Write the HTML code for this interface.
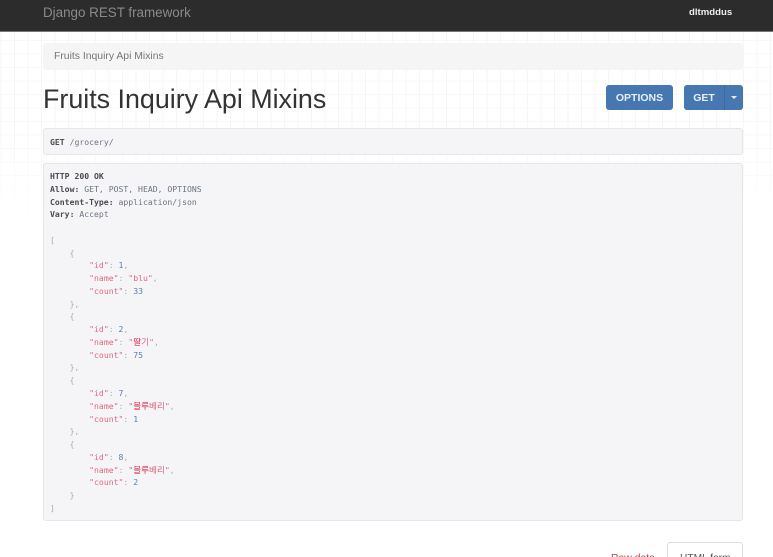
<!DOCTYPE html>
<html lang="en">
<head>
<meta charset="utf-8">
<title>Fruits Inquiry Api Mixins</title>
<style>
html,body{margin:0;padding:0;background:#fff;width:773px;height:557px;overflow:hidden;}
#page{position:relative;width:773px;height:557px;overflow:hidden;font-family:"Liberation Sans",sans-serif;}
#grid{position:absolute;left:0;top:31px;width:773px;height:195px;
 background-image:linear-gradient(to right,#f6f6f6 1px,transparent 1px),linear-gradient(to bottom,#f8f8f8 1px,transparent 1px);
 background-size:13.5px 13.5px;background-position:0.5px 9px;
 -webkit-mask-image:linear-gradient(to bottom,#000 0,#000 50%,transparent 100%);
 mask-image:linear-gradient(to bottom,#000 0,#000 50%,transparent 100%);}
#nav{position:absolute;left:0;top:0;width:773px;height:31px;background:#2c2c2c;border-bottom:1px solid #777;}
#brand{position:absolute;left:43px;top:5px;font-size:13.4px;line-height:16px;color:#8a8a8a;white-space:nowrap;}
#user{position:absolute;left:689px;top:7px;font-size:9.6px;line-height:12px;font-weight:bold;color:#eee;white-space:nowrap;}
#crumb{position:absolute;left:43px;top:43px;width:700px;height:27px;background:#f5f5f5;border-radius:3px;}
#crumb span{position:absolute;left:11px;top:7px;font-size:10.4px;line-height:13px;color:#777;white-space:nowrap;}
h1{position:absolute;left:43px;top:81px;margin:0;font-size:26.83px;line-height:36px;font-weight:normal;color:#333;white-space:nowrap;}
.btn{position:absolute;top:85px;height:25px;background:#4677b0;color:#e8eef5;font-size:10.5px;line-height:26px;font-weight:bold;text-align:center;}
#opt{left:606px;width:67px;border-radius:3px;}
#get{left:684px;width:40px;border-radius:3px 0 0 3px;}
#car{left:724px;width:19px;border-radius:0 3px 3px 0;border-left:1px solid #3c6a9f;box-sizing:border-box;}
#car i{position:absolute;left:6px;top:11px;width:0;height:0;border-left:3px solid transparent;border-right:3px solid transparent;border-top:3px solid #e8eef5;}
.box{position:absolute;left:43px;width:700px;box-sizing:border-box;background:#f5f5f8;border:1px solid #e6e6e6;border-radius:3px;}
#req{top:128px;height:27px;}
#res{top:163px;height:358px;}
pre{position:absolute;left:6px;margin:0;font-family:"DejaVu Sans Mono","Noto Sans CJK KR",monospace;font-size:8.15px;line-height:12.77px;color:#6c7480;white-space:pre;}
#req pre{top:7px;}
#res pre{top:6px;}
b{color:#4a4a50;font-weight:bold;}
.s{color:#dc6a80;}
.n{color:#5d7fa0;}
.p{color:#a5aeae;}
.k{color:#dd2a4c;}
.h{font-family:"Noto Sans CJK KR",sans-serif;font-size:8.6px;line-height:1;}
#raw{position:absolute;left:611px;top:552px;font-size:10.4px;line-height:13px;white-space:nowrap;color:#a94442;}
#html{position:absolute;left:667px;top:542px;width:76px;height:30px;box-sizing:border-box;border:1px solid #ddd;border-radius:3px 3px 0 0;background:#fff;}
#html span{position:absolute;left:12px;top:9px;font-size:10.2px;line-height:13px;color:#555;white-space:nowrap;}
</style>
</head>
<body>
<div id="page">
<div id="grid"></div>
<div id="nav">
  <div id="brand">Django REST framework</div>
  <div id="user">dltmddus</div>
</div>
<div id="crumb"><span>Fruits Inquiry Api Mixins</span></div>
<h1>Fruits Inquiry Api Mixins</h1>
<div class="btn" id="opt">OPTIONS</div>
<div class="btn" id="get">GET</div>
<div class="btn" id="car"><i></i></div>
<div class="box" id="req"><pre><b>GET</b> /grocery/</pre></div>
<div class="box" id="res"><pre><b>HTTP 200 OK</b>
<b>Allow:</b> GET, POST, HEAD, OPTIONS
<b>Content-Type:</b> application/json
<b>Vary:</b> Accept

<span class="p">[</span>
    <span class="p">{</span>
        <span class="s">"id"</span><span class="p">:</span> <span class="n">1</span><span class="p">,</span>
        <span class="s">"name"</span><span class="p">:</span> <span class="s">"blu"</span><span class="p">,</span>
        <span class="s">"count"</span><span class="p">:</span> <span class="n">33</span>
    <span class="p">},</span>
    <span class="p">{</span>
        <span class="s">"id"</span><span class="p">:</span> <span class="n">2</span><span class="p">,</span>
        <span class="s">"name"</span><span class="p">:</span> <span class="s">"<span class="h"><span class="k">딸</span>기</span>"</span><span class="p">,</span>
        <span class="s">"count"</span><span class="p">:</span> <span class="n">75</span>
    <span class="p">},</span>
    <span class="p">{</span>
        <span class="s">"id"</span><span class="p">:</span> <span class="n">7</span><span class="p">,</span>
        <span class="s">"name"</span><span class="p">:</span> <span class="s">"<span class="h"><span class="k">블루</span>베리</span>"</span><span class="p">,</span>
        <span class="s">"count"</span><span class="p">:</span> <span class="n">1</span>
    <span class="p">},</span>
    <span class="p">{</span>
        <span class="s">"id"</span><span class="p">:</span> <span class="n">8</span><span class="p">,</span>
        <span class="s">"name"</span><span class="p">:</span> <span class="s">"<span class="h"><span class="k">블루</span>베리</span>"</span><span class="p">,</span>
        <span class="s">"count"</span><span class="p">:</span> <span class="n">2</span>
    <span class="p">}</span>
<span class="p">]</span></pre></div>
<div id="raw">Raw data</div>
<div id="html"><span>HTML form</span></div>
</div>
</body>
</html>
